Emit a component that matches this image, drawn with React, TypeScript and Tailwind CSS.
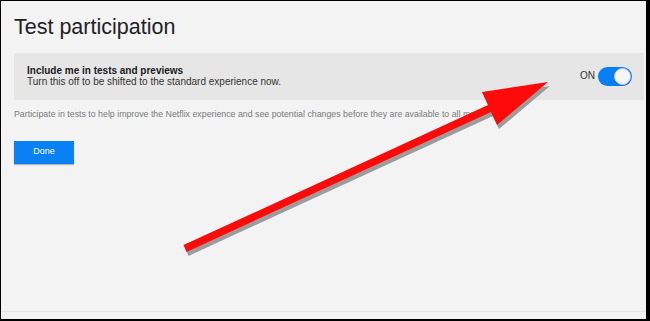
import React from "react";

const font = { fontFamily: '"Liberation Sans", Arial, sans-serif' };

function Toggle() {
  return (
    <div className="flex items-center gap-[3px]">
      <span className="text-[10px] leading-none text-[#333]">ON</span>
      <div className="relative h-[19px] w-[34px] rounded-full bg-[#0a7ef5]">
        <div className="absolute right-px top-px h-[17px] w-[17px] rounded-full border border-[#c8c8c8] bg-[#f7f7f7] shadow-[0_1px_1px_rgba(0,0,0,0.15)]" />
      </div>
    </div>
  );
}

function Arrow() {
  const d =
    "M183.5,245.1 L488,105.1 L482,92 L548,82 L497,125 L491,111.9 L186.5,251.9 Z";
  return (
    <svg
      className="pointer-events-none absolute left-0 top-0"
      width="650"
      height="321"
      viewBox="0 0 650 321"
    >
      <path d={d} fill="#9c9c9c" transform="translate(2,4)" />
      <path d={d} fill="#ff0a0a" />
    </svg>
  );
}

export default function App() {
  return (
    <div
      className="relative h-[321px] w-[650px] bg-black pb-[2px] pl-px pr-[4px] pt-px"
      style={font}
    >
      <div className="flex h-full flex-col bg-[#f3f3f3]">
        <div className="flex-1 pl-[13px] pr-[2px] pt-[16px]">
          <h1 className="text-[21.5px] leading-none text-[#222]">Test participation</h1>

          {/* setting row */}
          <div className="mt-[14px] flex h-[47px] items-center justify-between bg-[#e6e6e6] pl-[13px] pr-[12px]">
            <div className="text-[10px] leading-[11px]">
              <p className="font-bold text-[#1a1a1a]">Include me in tests and previews</p>
              <p className="text-[#333]">Turn this off to be shifted to the standard experience now.</p>
            </div>
            <Toggle />
          </div>

          <p className="mt-[9px] text-[8.8px] leading-[10px] text-[#7a7a7a]">
            Participate in tests to help improve the Netflix experience and see potential changes before they are available to all members.
          </p>

          <button className="mt-[22px] flex h-[23px] w-[60px] items-center justify-center bg-[#0a80f5] text-[9px] font-medium text-white shadow-[0_1px_1px_rgba(0,0,0,0.25)]">
            Done
          </button>
        </div>
        <div className="h-[8px] border-t border-[#e4e4e4]" />
      </div>
      <Arrow />
    </div>
  );
}
